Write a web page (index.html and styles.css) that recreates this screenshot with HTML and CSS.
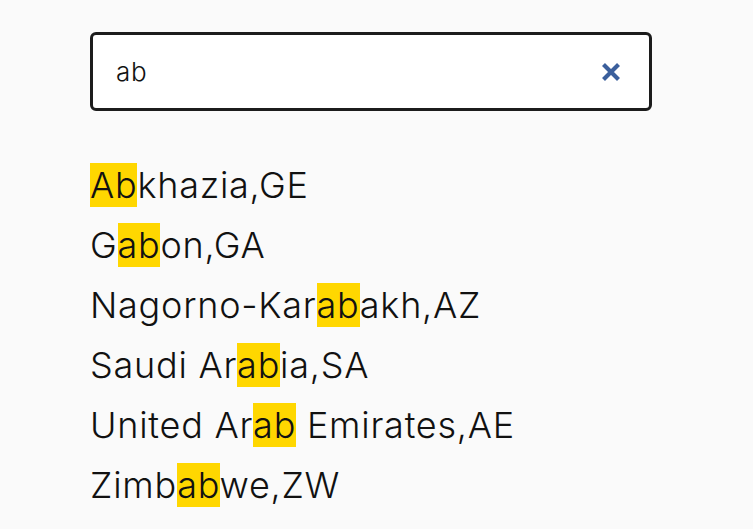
FILE: index.html
```html
<!DOCTYPE html>
<html lang="en">
<head>
    <meta charset="UTF-8">
    <meta name="viewport" content="width=device-width, initial-scale=1.0">
    <title>Country Search</title>
    <link rel="stylesheet" href="styles.css">
</head>
<body>
    <main class="search">
        <div class="search-box">
            <input type="text" class="search-input" value="ab">
            <button class="clear-button" aria-label="Clear">
                <svg width="20" height="20" viewBox="0 0 20 20">
                    <path d="M2.5 2.5 L17.5 17.5 M17.5 2.5 L2.5 17.5" stroke="#3b5f9c" stroke-width="4.2"/>
                </svg>
            </button>
        </div>
        <ul class="results">
            <li><mark>Ab</mark>khazia,GE</li>
            <li>G<mark>ab</mark>on,GA</li>
            <li>Nagorno-Kar<mark>ab</mark>akh,AZ</li>
            <li>Saudi Ar<mark>ab</mark>ia,SA</li>
            <li>United Ar<mark>ab</mark> Emirates,AE</li>
            <li>Zimb<mark>ab</mark>we,ZW</li>
        </ul>
    </main>
</body>
</html>
```

FILE: styles.css
```css
body {
    margin: 0;
    background: #fafafa;
    font-family: Inter, "Noto Sans", sans-serif;
    color: #111;
}
.search {
    width: 562px;
    padding: 32px 0 0 90px;
}
.search-box {
    display: flex;
    align-items: center;
    height: 79px;
    box-sizing: border-box;
    border: 3px solid #1c1c1c;
    border-radius: 6px;
    background: #fff;
    padding: 0 28px 0 23px;
}
.search-input {
    flex: 1;
    border: none;
    outline: none;
    background: transparent;
    font-family: inherit;
    font-size: 26px;
    font-weight: 300;
    letter-spacing: 0.8px;
    color: #111;
    padding: 0;
}
.clear-button {
    border: none;
    background: none;
    padding: 0;
    display: flex;
    cursor: pointer;
}
.results {
    list-style: none;
    margin: 44px 0 0;
    padding: 0;
    font-size: 36px;
    font-weight: 300;
    letter-spacing: 0.75px;
    line-height: 60px;
}
mark {
    background: #ffd700;
    color: inherit;
}
```
